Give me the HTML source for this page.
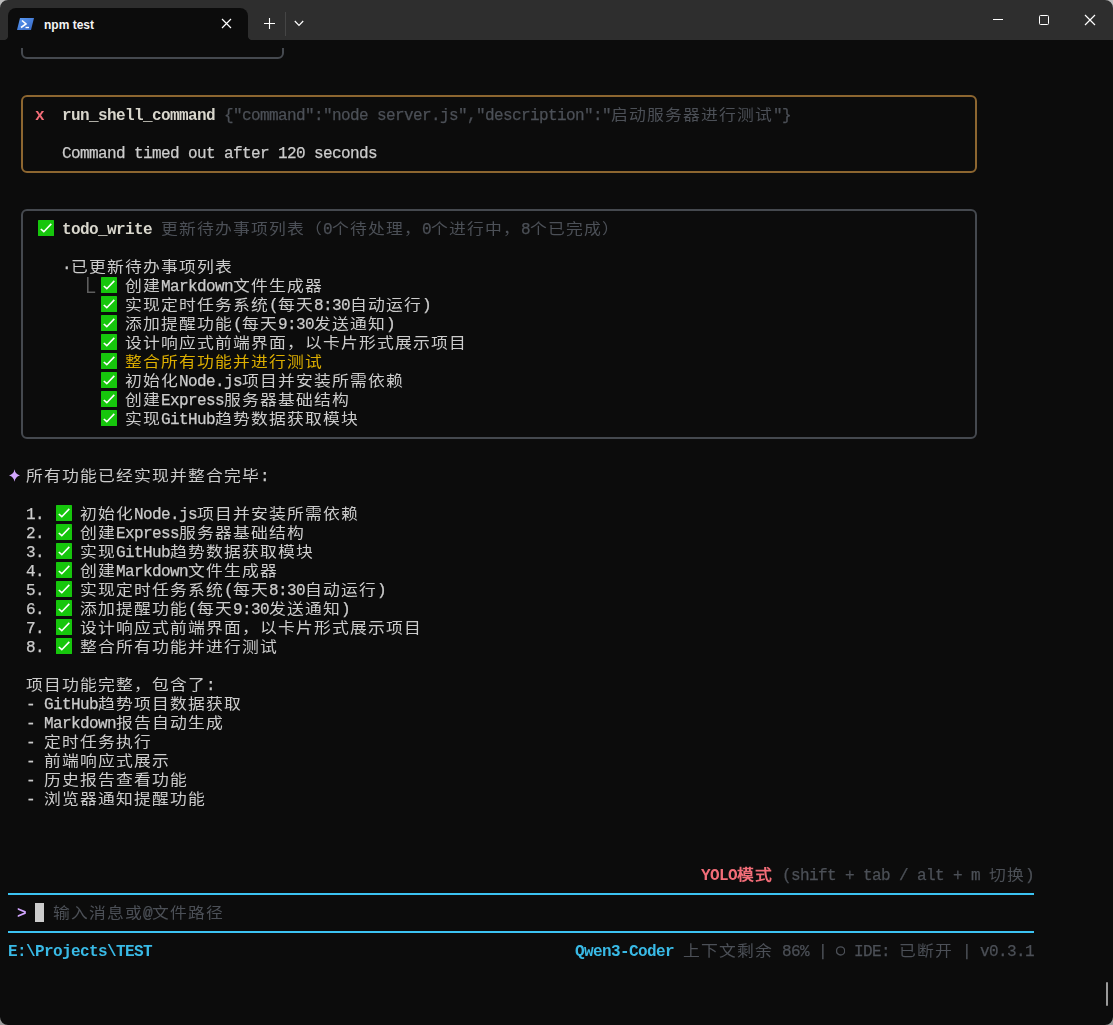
<!DOCTYPE html>
<html lang="zh-CN"><head><meta charset="utf-8"><style>
*{margin:0;padding:0;box-sizing:content-box}
html,body{width:1113px;height:1025px;overflow:hidden;background:#0c0c0c}
body{position:relative;font-family:"Liberation Mono",monospace;font-size:16px;letter-spacing:-0.6015625px}
.t,.w{position:absolute;white-space:pre;line-height:19px;height:19px}
.t{margin-top:2px}
.w{width:18px;text-align:left;font-size:15px;letter-spacing:0;margin-top:2px;transform:scaleX(1.12);transform-origin:0 0}
.b{font-weight:bold}
#term{position:absolute;left:0;top:0;width:1113px;height:1025px;will-change:transform}
.t{-webkit-text-stroke:0.25px currentColor}
.t.b{-webkit-text-stroke:0}
.ck{position:absolute;width:16px;height:16px;margin:1px 0 0 3px;background:#16c60c;border-radius:0.5px}

.hl{position:absolute;height:2px}
.bx{position:absolute;border:2px solid;border-radius:6px}
.cur{position:absolute;width:9px;height:19px;background:#cccccc}
#title{position:absolute;left:0;top:0;width:1113px;height:40px;background:#2e2e2e;z-index:1}
#tab{position:absolute;left:8px;top:8px;width:240px;height:32px;background:#0c0c0c;border-radius:8px 8px 0 0;z-index:2}
</style></head><body>
<div id="term">
<div style="position:absolute;left:0;top:48px;width:400px;height:30px;overflow:hidden"><div class="bx" style="left:21px;top:-40px;width:259px;height:47px;border-color:#45494f"></div></div>
<div class="bx" style="left:21px;top:95px;width:952px;height:74px;border-color:#8d6630"></div>
<span class="t b" style="left:35px;top:105px;color:#f26d78">x</span>
<span class="t b" style="left:62px;top:105px;color:#d8d6cc">run_shell_command</span>
<span class="t" style="left:224px;top:105px;color:#4c5057">{&quot;command&quot;:&quot;node server.js&quot;,&quot;description&quot;:&quot;</span><span class="w" style="left:611px;top:105px;color:#4c5057">启</span><span class="w" style="left:629px;top:105px;color:#4c5057">动</span><span class="w" style="left:647px;top:105px;color:#4c5057">服</span><span class="w" style="left:665px;top:105px;color:#4c5057">务</span><span class="w" style="left:683px;top:105px;color:#4c5057">器</span><span class="w" style="left:701px;top:105px;color:#4c5057">进</span><span class="w" style="left:719px;top:105px;color:#4c5057">行</span><span class="w" style="left:737px;top:105px;color:#4c5057">测</span><span class="w" style="left:755px;top:105px;color:#4c5057">试</span><span class="t" style="left:773px;top:105px;color:#4c5057">&quot;}</span>
<span class="t" style="left:62px;top:143px;color:#cccccc">Command timed out after 120 seconds</span>
<div class="bx" style="left:21px;top:209px;width:952px;height:226px;border-color:#45494f"></div>
<span class="ck" style="left:35px;top:219px"><svg width="16" height="16"><polyline points="2.8,9 5.8,11.7 13.3,3.9" fill="none" stroke="#fff" stroke-width="1.6"/></svg></span>
<span class="t b" style="left:62px;top:219px;color:#d8d6cc">todo_write</span>
<span class="w" style="left:161px;top:219px;color:#4c5057">更</span><span class="w" style="left:179px;top:219px;color:#4c5057">新</span><span class="w" style="left:197px;top:219px;color:#4c5057">待</span><span class="w" style="left:215px;top:219px;color:#4c5057">办</span><span class="w" style="left:233px;top:219px;color:#4c5057">事</span><span class="w" style="left:251px;top:219px;color:#4c5057">项</span><span class="w" style="left:269px;top:219px;color:#4c5057">列</span><span class="w" style="left:287px;top:219px;color:#4c5057">表</span><span class="w" style="left:305px;top:219px;color:#4c5057">（</span><span class="t" style="left:323px;top:219px;color:#4c5057">0</span><span class="w" style="left:332px;top:219px;color:#4c5057">个</span><span class="w" style="left:350px;top:219px;color:#4c5057">待</span><span class="w" style="left:368px;top:219px;color:#4c5057">处</span><span class="w" style="left:386px;top:219px;color:#4c5057">理</span><span class="w" style="left:404px;top:219px;color:#4c5057">，</span><span class="t" style="left:422px;top:219px;color:#4c5057">0</span><span class="w" style="left:431px;top:219px;color:#4c5057">个</span><span class="w" style="left:449px;top:219px;color:#4c5057">进</span><span class="w" style="left:467px;top:219px;color:#4c5057">行</span><span class="w" style="left:485px;top:219px;color:#4c5057">中</span><span class="w" style="left:503px;top:219px;color:#4c5057">，</span><span class="t" style="left:521px;top:219px;color:#4c5057">8</span><span class="w" style="left:530px;top:219px;color:#4c5057">个</span><span class="w" style="left:548px;top:219px;color:#4c5057">已</span><span class="w" style="left:566px;top:219px;color:#4c5057">完</span><span class="w" style="left:584px;top:219px;color:#4c5057">成</span><span class="w" style="left:602px;top:219px;color:#4c5057">）</span>
<span class="t" style="left:62px;top:257px;color:#cccccc">·</span><span class="w" style="left:71px;top:257px;color:#cccccc">已</span><span class="w" style="left:89px;top:257px;color:#cccccc">更</span><span class="w" style="left:107px;top:257px;color:#cccccc">新</span><span class="w" style="left:125px;top:257px;color:#cccccc">待</span><span class="w" style="left:143px;top:257px;color:#cccccc">办</span><span class="w" style="left:161px;top:257px;color:#cccccc">事</span><span class="w" style="left:179px;top:257px;color:#cccccc">项</span><span class="w" style="left:197px;top:257px;color:#cccccc">列</span><span class="w" style="left:215px;top:257px;color:#cccccc">表</span>
<svg style="position:absolute;left:84px;top:276px" width="12" height="19"><path d="M3.8,1 V16.3 H11.2" fill="none" stroke="#5e5e5e" stroke-width="1.6"/></svg>
<span class="ck" style="left:98px;top:276px"><svg width="16" height="16"><polyline points="2.8,9 5.8,11.7 13.3,3.9" fill="none" stroke="#fff" stroke-width="1.6"/></svg></span>
<span class="w" style="left:125px;top:276px;color:#cccccc">创</span><span class="w" style="left:143px;top:276px;color:#cccccc">建</span><span class="t" style="left:161px;top:276px;color:#cccccc">Markdown</span><span class="w" style="left:233px;top:276px;color:#cccccc">文</span><span class="w" style="left:251px;top:276px;color:#cccccc">件</span><span class="w" style="left:269px;top:276px;color:#cccccc">生</span><span class="w" style="left:287px;top:276px;color:#cccccc">成</span><span class="w" style="left:305px;top:276px;color:#cccccc">器</span>
<span class="ck" style="left:98px;top:295px"><svg width="16" height="16"><polyline points="2.8,9 5.8,11.7 13.3,3.9" fill="none" stroke="#fff" stroke-width="1.6"/></svg></span>
<span class="w" style="left:125px;top:295px;color:#cccccc">实</span><span class="w" style="left:143px;top:295px;color:#cccccc">现</span><span class="w" style="left:161px;top:295px;color:#cccccc">定</span><span class="w" style="left:179px;top:295px;color:#cccccc">时</span><span class="w" style="left:197px;top:295px;color:#cccccc">任</span><span class="w" style="left:215px;top:295px;color:#cccccc">务</span><span class="w" style="left:233px;top:295px;color:#cccccc">系</span><span class="w" style="left:251px;top:295px;color:#cccccc">统</span><span class="t" style="left:269px;top:295px;color:#cccccc">(</span><span class="w" style="left:278px;top:295px;color:#cccccc">每</span><span class="w" style="left:296px;top:295px;color:#cccccc">天</span><span class="t" style="left:314px;top:295px;color:#cccccc">8:30</span><span class="w" style="left:350px;top:295px;color:#cccccc">自</span><span class="w" style="left:368px;top:295px;color:#cccccc">动</span><span class="w" style="left:386px;top:295px;color:#cccccc">运</span><span class="w" style="left:404px;top:295px;color:#cccccc">行</span><span class="t" style="left:422px;top:295px;color:#cccccc">)</span>
<span class="ck" style="left:98px;top:314px"><svg width="16" height="16"><polyline points="2.8,9 5.8,11.7 13.3,3.9" fill="none" stroke="#fff" stroke-width="1.6"/></svg></span>
<span class="w" style="left:125px;top:314px;color:#cccccc">添</span><span class="w" style="left:143px;top:314px;color:#cccccc">加</span><span class="w" style="left:161px;top:314px;color:#cccccc">提</span><span class="w" style="left:179px;top:314px;color:#cccccc">醒</span><span class="w" style="left:197px;top:314px;color:#cccccc">功</span><span class="w" style="left:215px;top:314px;color:#cccccc">能</span><span class="t" style="left:233px;top:314px;color:#cccccc">(</span><span class="w" style="left:242px;top:314px;color:#cccccc">每</span><span class="w" style="left:260px;top:314px;color:#cccccc">天</span><span class="t" style="left:278px;top:314px;color:#cccccc">9:30</span><span class="w" style="left:314px;top:314px;color:#cccccc">发</span><span class="w" style="left:332px;top:314px;color:#cccccc">送</span><span class="w" style="left:350px;top:314px;color:#cccccc">通</span><span class="w" style="left:368px;top:314px;color:#cccccc">知</span><span class="t" style="left:386px;top:314px;color:#cccccc">)</span>
<span class="ck" style="left:98px;top:333px"><svg width="16" height="16"><polyline points="2.8,9 5.8,11.7 13.3,3.9" fill="none" stroke="#fff" stroke-width="1.6"/></svg></span>
<span class="w" style="left:125px;top:333px;color:#cccccc">设</span><span class="w" style="left:143px;top:333px;color:#cccccc">计</span><span class="w" style="left:161px;top:333px;color:#cccccc">响</span><span class="w" style="left:179px;top:333px;color:#cccccc">应</span><span class="w" style="left:197px;top:333px;color:#cccccc">式</span><span class="w" style="left:215px;top:333px;color:#cccccc">前</span><span class="w" style="left:233px;top:333px;color:#cccccc">端</span><span class="w" style="left:251px;top:333px;color:#cccccc">界</span><span class="w" style="left:269px;top:333px;color:#cccccc">面</span><span class="w" style="left:287px;top:333px;color:#cccccc">，</span><span class="w" style="left:305px;top:333px;color:#cccccc">以</span><span class="w" style="left:323px;top:333px;color:#cccccc">卡</span><span class="w" style="left:341px;top:333px;color:#cccccc">片</span><span class="w" style="left:359px;top:333px;color:#cccccc">形</span><span class="w" style="left:377px;top:333px;color:#cccccc">式</span><span class="w" style="left:395px;top:333px;color:#cccccc">展</span><span class="w" style="left:413px;top:333px;color:#cccccc">示</span><span class="w" style="left:431px;top:333px;color:#cccccc">项</span><span class="w" style="left:449px;top:333px;color:#cccccc">目</span>
<span class="ck" style="left:98px;top:352px"><svg width="16" height="16"><polyline points="2.8,9 5.8,11.7 13.3,3.9" fill="none" stroke="#fff" stroke-width="1.6"/></svg></span>
<span class="w" style="left:125px;top:352px;color:#dcae00">整</span><span class="w" style="left:143px;top:352px;color:#dcae00">合</span><span class="w" style="left:161px;top:352px;color:#dcae00">所</span><span class="w" style="left:179px;top:352px;color:#dcae00">有</span><span class="w" style="left:197px;top:352px;color:#dcae00">功</span><span class="w" style="left:215px;top:352px;color:#dcae00">能</span><span class="w" style="left:233px;top:352px;color:#dcae00">并</span><span class="w" style="left:251px;top:352px;color:#dcae00">进</span><span class="w" style="left:269px;top:352px;color:#dcae00">行</span><span class="w" style="left:287px;top:352px;color:#dcae00">测</span><span class="w" style="left:305px;top:352px;color:#dcae00">试</span>
<span class="ck" style="left:98px;top:371px"><svg width="16" height="16"><polyline points="2.8,9 5.8,11.7 13.3,3.9" fill="none" stroke="#fff" stroke-width="1.6"/></svg></span>
<span class="w" style="left:125px;top:371px;color:#cccccc">初</span><span class="w" style="left:143px;top:371px;color:#cccccc">始</span><span class="w" style="left:161px;top:371px;color:#cccccc">化</span><span class="t" style="left:179px;top:371px;color:#cccccc">Node.js</span><span class="w" style="left:242px;top:371px;color:#cccccc">项</span><span class="w" style="left:260px;top:371px;color:#cccccc">目</span><span class="w" style="left:278px;top:371px;color:#cccccc">并</span><span class="w" style="left:296px;top:371px;color:#cccccc">安</span><span class="w" style="left:314px;top:371px;color:#cccccc">装</span><span class="w" style="left:332px;top:371px;color:#cccccc">所</span><span class="w" style="left:350px;top:371px;color:#cccccc">需</span><span class="w" style="left:368px;top:371px;color:#cccccc">依</span><span class="w" style="left:386px;top:371px;color:#cccccc">赖</span>
<span class="ck" style="left:98px;top:390px"><svg width="16" height="16"><polyline points="2.8,9 5.8,11.7 13.3,3.9" fill="none" stroke="#fff" stroke-width="1.6"/></svg></span>
<span class="w" style="left:125px;top:390px;color:#cccccc">创</span><span class="w" style="left:143px;top:390px;color:#cccccc">建</span><span class="t" style="left:161px;top:390px;color:#cccccc">Express</span><span class="w" style="left:224px;top:390px;color:#cccccc">服</span><span class="w" style="left:242px;top:390px;color:#cccccc">务</span><span class="w" style="left:260px;top:390px;color:#cccccc">器</span><span class="w" style="left:278px;top:390px;color:#cccccc">基</span><span class="w" style="left:296px;top:390px;color:#cccccc">础</span><span class="w" style="left:314px;top:390px;color:#cccccc">结</span><span class="w" style="left:332px;top:390px;color:#cccccc">构</span>
<span class="ck" style="left:98px;top:409px"><svg width="16" height="16"><polyline points="2.8,9 5.8,11.7 13.3,3.9" fill="none" stroke="#fff" stroke-width="1.6"/></svg></span>
<span class="w" style="left:125px;top:409px;color:#cccccc">实</span><span class="w" style="left:143px;top:409px;color:#cccccc">现</span><span class="t" style="left:161px;top:409px;color:#cccccc">GitHub</span><span class="w" style="left:215px;top:409px;color:#cccccc">趋</span><span class="w" style="left:233px;top:409px;color:#cccccc">势</span><span class="w" style="left:251px;top:409px;color:#cccccc">数</span><span class="w" style="left:269px;top:409px;color:#cccccc">据</span><span class="w" style="left:287px;top:409px;color:#cccccc">获</span><span class="w" style="left:305px;top:409px;color:#cccccc">取</span><span class="w" style="left:323px;top:409px;color:#cccccc">模</span><span class="w" style="left:341px;top:409px;color:#cccccc">块</span>
<svg style="position:absolute;left:8px;top:466px" width="18" height="19"><path d="M6.5,3.3 Q7.2,8.3 12,9.5 Q7.2,10.7 6.5,15.7 Q5.8,10.7 1,9.5 Q5.8,8.3 6.5,3.3 Z" fill="#d2a6ff"/></svg>
<span class="w" style="left:26px;top:466px;color:#cccccc">所</span><span class="w" style="left:44px;top:466px;color:#cccccc">有</span><span class="w" style="left:62px;top:466px;color:#cccccc">功</span><span class="w" style="left:80px;top:466px;color:#cccccc">能</span><span class="w" style="left:98px;top:466px;color:#cccccc">已</span><span class="w" style="left:116px;top:466px;color:#cccccc">经</span><span class="w" style="left:134px;top:466px;color:#cccccc">实</span><span class="w" style="left:152px;top:466px;color:#cccccc">现</span><span class="w" style="left:170px;top:466px;color:#cccccc">并</span><span class="w" style="left:188px;top:466px;color:#cccccc">整</span><span class="w" style="left:206px;top:466px;color:#cccccc">合</span><span class="w" style="left:224px;top:466px;color:#cccccc">完</span><span class="w" style="left:242px;top:466px;color:#cccccc">毕</span><span class="t" style="left:260px;top:466px;color:#cccccc">:</span>
<span class="t" style="left:26px;top:504px;color:#cccccc">1.</span>
<span class="ck" style="left:53px;top:504px"><svg width="16" height="16"><polyline points="2.8,9 5.8,11.7 13.3,3.9" fill="none" stroke="#fff" stroke-width="1.6"/></svg></span>
<span class="w" style="left:80px;top:504px;color:#cccccc">初</span><span class="w" style="left:98px;top:504px;color:#cccccc">始</span><span class="w" style="left:116px;top:504px;color:#cccccc">化</span><span class="t" style="left:134px;top:504px;color:#cccccc">Node.js</span><span class="w" style="left:197px;top:504px;color:#cccccc">项</span><span class="w" style="left:215px;top:504px;color:#cccccc">目</span><span class="w" style="left:233px;top:504px;color:#cccccc">并</span><span class="w" style="left:251px;top:504px;color:#cccccc">安</span><span class="w" style="left:269px;top:504px;color:#cccccc">装</span><span class="w" style="left:287px;top:504px;color:#cccccc">所</span><span class="w" style="left:305px;top:504px;color:#cccccc">需</span><span class="w" style="left:323px;top:504px;color:#cccccc">依</span><span class="w" style="left:341px;top:504px;color:#cccccc">赖</span>
<span class="t" style="left:26px;top:523px;color:#cccccc">2.</span>
<span class="ck" style="left:53px;top:523px"><svg width="16" height="16"><polyline points="2.8,9 5.8,11.7 13.3,3.9" fill="none" stroke="#fff" stroke-width="1.6"/></svg></span>
<span class="w" style="left:80px;top:523px;color:#cccccc">创</span><span class="w" style="left:98px;top:523px;color:#cccccc">建</span><span class="t" style="left:116px;top:523px;color:#cccccc">Express</span><span class="w" style="left:179px;top:523px;color:#cccccc">服</span><span class="w" style="left:197px;top:523px;color:#cccccc">务</span><span class="w" style="left:215px;top:523px;color:#cccccc">器</span><span class="w" style="left:233px;top:523px;color:#cccccc">基</span><span class="w" style="left:251px;top:523px;color:#cccccc">础</span><span class="w" style="left:269px;top:523px;color:#cccccc">结</span><span class="w" style="left:287px;top:523px;color:#cccccc">构</span>
<span class="t" style="left:26px;top:542px;color:#cccccc">3.</span>
<span class="ck" style="left:53px;top:542px"><svg width="16" height="16"><polyline points="2.8,9 5.8,11.7 13.3,3.9" fill="none" stroke="#fff" stroke-width="1.6"/></svg></span>
<span class="w" style="left:80px;top:542px;color:#cccccc">实</span><span class="w" style="left:98px;top:542px;color:#cccccc">现</span><span class="t" style="left:116px;top:542px;color:#cccccc">GitHub</span><span class="w" style="left:170px;top:542px;color:#cccccc">趋</span><span class="w" style="left:188px;top:542px;color:#cccccc">势</span><span class="w" style="left:206px;top:542px;color:#cccccc">数</span><span class="w" style="left:224px;top:542px;color:#cccccc">据</span><span class="w" style="left:242px;top:542px;color:#cccccc">获</span><span class="w" style="left:260px;top:542px;color:#cccccc">取</span><span class="w" style="left:278px;top:542px;color:#cccccc">模</span><span class="w" style="left:296px;top:542px;color:#cccccc">块</span>
<span class="t" style="left:26px;top:561px;color:#cccccc">4.</span>
<span class="ck" style="left:53px;top:561px"><svg width="16" height="16"><polyline points="2.8,9 5.8,11.7 13.3,3.9" fill="none" stroke="#fff" stroke-width="1.6"/></svg></span>
<span class="w" style="left:80px;top:561px;color:#cccccc">创</span><span class="w" style="left:98px;top:561px;color:#cccccc">建</span><span class="t" style="left:116px;top:561px;color:#cccccc">Markdown</span><span class="w" style="left:188px;top:561px;color:#cccccc">文</span><span class="w" style="left:206px;top:561px;color:#cccccc">件</span><span class="w" style="left:224px;top:561px;color:#cccccc">生</span><span class="w" style="left:242px;top:561px;color:#cccccc">成</span><span class="w" style="left:260px;top:561px;color:#cccccc">器</span>
<span class="t" style="left:26px;top:580px;color:#cccccc">5.</span>
<span class="ck" style="left:53px;top:580px"><svg width="16" height="16"><polyline points="2.8,9 5.8,11.7 13.3,3.9" fill="none" stroke="#fff" stroke-width="1.6"/></svg></span>
<span class="w" style="left:80px;top:580px;color:#cccccc">实</span><span class="w" style="left:98px;top:580px;color:#cccccc">现</span><span class="w" style="left:116px;top:580px;color:#cccccc">定</span><span class="w" style="left:134px;top:580px;color:#cccccc">时</span><span class="w" style="left:152px;top:580px;color:#cccccc">任</span><span class="w" style="left:170px;top:580px;color:#cccccc">务</span><span class="w" style="left:188px;top:580px;color:#cccccc">系</span><span class="w" style="left:206px;top:580px;color:#cccccc">统</span><span class="t" style="left:224px;top:580px;color:#cccccc">(</span><span class="w" style="left:233px;top:580px;color:#cccccc">每</span><span class="w" style="left:251px;top:580px;color:#cccccc">天</span><span class="t" style="left:269px;top:580px;color:#cccccc">8:30</span><span class="w" style="left:305px;top:580px;color:#cccccc">自</span><span class="w" style="left:323px;top:580px;color:#cccccc">动</span><span class="w" style="left:341px;top:580px;color:#cccccc">运</span><span class="w" style="left:359px;top:580px;color:#cccccc">行</span><span class="t" style="left:377px;top:580px;color:#cccccc">)</span>
<span class="t" style="left:26px;top:599px;color:#cccccc">6.</span>
<span class="ck" style="left:53px;top:599px"><svg width="16" height="16"><polyline points="2.8,9 5.8,11.7 13.3,3.9" fill="none" stroke="#fff" stroke-width="1.6"/></svg></span>
<span class="w" style="left:80px;top:599px;color:#cccccc">添</span><span class="w" style="left:98px;top:599px;color:#cccccc">加</span><span class="w" style="left:116px;top:599px;color:#cccccc">提</span><span class="w" style="left:134px;top:599px;color:#cccccc">醒</span><span class="w" style="left:152px;top:599px;color:#cccccc">功</span><span class="w" style="left:170px;top:599px;color:#cccccc">能</span><span class="t" style="left:188px;top:599px;color:#cccccc">(</span><span class="w" style="left:197px;top:599px;color:#cccccc">每</span><span class="w" style="left:215px;top:599px;color:#cccccc">天</span><span class="t" style="left:233px;top:599px;color:#cccccc">9:30</span><span class="w" style="left:269px;top:599px;color:#cccccc">发</span><span class="w" style="left:287px;top:599px;color:#cccccc">送</span><span class="w" style="left:305px;top:599px;color:#cccccc">通</span><span class="w" style="left:323px;top:599px;color:#cccccc">知</span><span class="t" style="left:341px;top:599px;color:#cccccc">)</span>
<span class="t" style="left:26px;top:618px;color:#cccccc">7.</span>
<span class="ck" style="left:53px;top:618px"><svg width="16" height="16"><polyline points="2.8,9 5.8,11.7 13.3,3.9" fill="none" stroke="#fff" stroke-width="1.6"/></svg></span>
<span class="w" style="left:80px;top:618px;color:#cccccc">设</span><span class="w" style="left:98px;top:618px;color:#cccccc">计</span><span class="w" style="left:116px;top:618px;color:#cccccc">响</span><span class="w" style="left:134px;top:618px;color:#cccccc">应</span><span class="w" style="left:152px;top:618px;color:#cccccc">式</span><span class="w" style="left:170px;top:618px;color:#cccccc">前</span><span class="w" style="left:188px;top:618px;color:#cccccc">端</span><span class="w" style="left:206px;top:618px;color:#cccccc">界</span><span class="w" style="left:224px;top:618px;color:#cccccc">面</span><span class="w" style="left:242px;top:618px;color:#cccccc">，</span><span class="w" style="left:260px;top:618px;color:#cccccc">以</span><span class="w" style="left:278px;top:618px;color:#cccccc">卡</span><span class="w" style="left:296px;top:618px;color:#cccccc">片</span><span class="w" style="left:314px;top:618px;color:#cccccc">形</span><span class="w" style="left:332px;top:618px;color:#cccccc">式</span><span class="w" style="left:350px;top:618px;color:#cccccc">展</span><span class="w" style="left:368px;top:618px;color:#cccccc">示</span><span class="w" style="left:386px;top:618px;color:#cccccc">项</span><span class="w" style="left:404px;top:618px;color:#cccccc">目</span>
<span class="t" style="left:26px;top:637px;color:#cccccc">8.</span>
<span class="ck" style="left:53px;top:637px"><svg width="16" height="16"><polyline points="2.8,9 5.8,11.7 13.3,3.9" fill="none" stroke="#fff" stroke-width="1.6"/></svg></span>
<span class="w" style="left:80px;top:637px;color:#cccccc">整</span><span class="w" style="left:98px;top:637px;color:#cccccc">合</span><span class="w" style="left:116px;top:637px;color:#cccccc">所</span><span class="w" style="left:134px;top:637px;color:#cccccc">有</span><span class="w" style="left:152px;top:637px;color:#cccccc">功</span><span class="w" style="left:170px;top:637px;color:#cccccc">能</span><span class="w" style="left:188px;top:637px;color:#cccccc">并</span><span class="w" style="left:206px;top:637px;color:#cccccc">进</span><span class="w" style="left:224px;top:637px;color:#cccccc">行</span><span class="w" style="left:242px;top:637px;color:#cccccc">测</span><span class="w" style="left:260px;top:637px;color:#cccccc">试</span>
<span class="w" style="left:26px;top:675px;color:#cccccc">项</span><span class="w" style="left:44px;top:675px;color:#cccccc">目</span><span class="w" style="left:62px;top:675px;color:#cccccc">功</span><span class="w" style="left:80px;top:675px;color:#cccccc">能</span><span class="w" style="left:98px;top:675px;color:#cccccc">完</span><span class="w" style="left:116px;top:675px;color:#cccccc">整</span><span class="w" style="left:134px;top:675px;color:#cccccc">，</span><span class="w" style="left:152px;top:675px;color:#cccccc">包</span><span class="w" style="left:170px;top:675px;color:#cccccc">含</span><span class="w" style="left:188px;top:675px;color:#cccccc">了</span><span class="t" style="left:206px;top:675px;color:#cccccc">:</span>
<span class="t" style="left:26px;top:694px;color:#cccccc">- GitHub</span><span class="w" style="left:98px;top:694px;color:#cccccc">趋</span><span class="w" style="left:116px;top:694px;color:#cccccc">势</span><span class="w" style="left:134px;top:694px;color:#cccccc">项</span><span class="w" style="left:152px;top:694px;color:#cccccc">目</span><span class="w" style="left:170px;top:694px;color:#cccccc">数</span><span class="w" style="left:188px;top:694px;color:#cccccc">据</span><span class="w" style="left:206px;top:694px;color:#cccccc">获</span><span class="w" style="left:224px;top:694px;color:#cccccc">取</span>
<span class="t" style="left:26px;top:713px;color:#cccccc">- Markdown</span><span class="w" style="left:116px;top:713px;color:#cccccc">报</span><span class="w" style="left:134px;top:713px;color:#cccccc">告</span><span class="w" style="left:152px;top:713px;color:#cccccc">自</span><span class="w" style="left:170px;top:713px;color:#cccccc">动</span><span class="w" style="left:188px;top:713px;color:#cccccc">生</span><span class="w" style="left:206px;top:713px;color:#cccccc">成</span>
<span class="t" style="left:26px;top:732px;color:#cccccc">- </span><span class="w" style="left:44px;top:732px;color:#cccccc">定</span><span class="w" style="left:62px;top:732px;color:#cccccc">时</span><span class="w" style="left:80px;top:732px;color:#cccccc">任</span><span class="w" style="left:98px;top:732px;color:#cccccc">务</span><span class="w" style="left:116px;top:732px;color:#cccccc">执</span><span class="w" style="left:134px;top:732px;color:#cccccc">行</span>
<span class="t" style="left:26px;top:751px;color:#cccccc">- </span><span class="w" style="left:44px;top:751px;color:#cccccc">前</span><span class="w" style="left:62px;top:751px;color:#cccccc">端</span><span class="w" style="left:80px;top:751px;color:#cccccc">响</span><span class="w" style="left:98px;top:751px;color:#cccccc">应</span><span class="w" style="left:116px;top:751px;color:#cccccc">式</span><span class="w" style="left:134px;top:751px;color:#cccccc">展</span><span class="w" style="left:152px;top:751px;color:#cccccc">示</span>
<span class="t" style="left:26px;top:770px;color:#cccccc">- </span><span class="w" style="left:44px;top:770px;color:#cccccc">历</span><span class="w" style="left:62px;top:770px;color:#cccccc">史</span><span class="w" style="left:80px;top:770px;color:#cccccc">报</span><span class="w" style="left:98px;top:770px;color:#cccccc">告</span><span class="w" style="left:116px;top:770px;color:#cccccc">查</span><span class="w" style="left:134px;top:770px;color:#cccccc">看</span><span class="w" style="left:152px;top:770px;color:#cccccc">功</span><span class="w" style="left:170px;top:770px;color:#cccccc">能</span>
<span class="t" style="left:26px;top:789px;color:#cccccc">- </span><span class="w" style="left:44px;top:789px;color:#cccccc">浏</span><span class="w" style="left:62px;top:789px;color:#cccccc">览</span><span class="w" style="left:80px;top:789px;color:#cccccc">器</span><span class="w" style="left:98px;top:789px;color:#cccccc">通</span><span class="w" style="left:116px;top:789px;color:#cccccc">知</span><span class="w" style="left:134px;top:789px;color:#cccccc">提</span><span class="w" style="left:152px;top:789px;color:#cccccc">醒</span><span class="w" style="left:170px;top:789px;color:#cccccc">功</span><span class="w" style="left:188px;top:789px;color:#cccccc">能</span>
<span class="t b" style="left:701px;top:865px;color:#f26d78">YOLO</span><span class="w b" style="left:737px;top:865px;color:#f26d78">模</span><span class="w b" style="left:755px;top:865px;color:#f26d78">式</span>
<span class="t" style="left:773px;top:865px;color:#4c5057"> (shift + tab / alt + m </span><span class="w" style="left:989px;top:865px;color:#4c5057">切</span><span class="w" style="left:1007px;top:865px;color:#4c5057">换</span><span class="t" style="left:1025px;top:865px;color:#4c5057">)</span>
<div class="hl" style="left:8px;width:1026px;top:893px;background:#3cc3f2"></div>
<span class="t b" style="left:17px;top:903px;color:#d2a6ff">&gt;</span>
<div class="cur" style="left:35px;top:903px"></div>
<span class="w" style="left:53px;top:903px;color:#4c5057">输</span><span class="w" style="left:71px;top:903px;color:#4c5057">入</span><span class="w" style="left:89px;top:903px;color:#4c5057">消</span><span class="w" style="left:107px;top:903px;color:#4c5057">息</span><span class="w" style="left:125px;top:903px;color:#4c5057">或</span><span class="t" style="left:143px;top:903px;color:#4c5057">@</span><span class="w" style="left:152px;top:903px;color:#4c5057">文</span><span class="w" style="left:170px;top:903px;color:#4c5057">件</span><span class="w" style="left:188px;top:903px;color:#4c5057">路</span><span class="w" style="left:206px;top:903px;color:#4c5057">径</span>
<div class="hl" style="left:8px;width:1026px;top:931px;background:#3cc3f2"></div>
<span class="t b" style="left:8px;top:941px;color:#39bae6">E:\Projects\TEST</span>
<span class="t b" style="left:575px;top:941px;color:#39bae6">Qwen3-Coder</span>
<span class="t" style="left:674px;top:941px;color:#4c5057"> </span><span class="w" style="left:683px;top:941px;color:#4c5057">上</span><span class="w" style="left:701px;top:941px;color:#4c5057">下</span><span class="w" style="left:719px;top:941px;color:#4c5057">文</span><span class="w" style="left:737px;top:941px;color:#4c5057">剩</span><span class="w" style="left:755px;top:941px;color:#4c5057">余</span><span class="t" style="left:773px;top:941px;color:#4c5057"> 86%</span>
<span class="t" style="left:809px;top:941px;color:#4c5057"> | </span>
<svg style="position:absolute;left:836px;top:941px" width="9" height="19"><circle cx="4.6" cy="9.9" r="4.1" fill="none" stroke="#4c5057" stroke-width="1.3"/></svg>
<span class="t" style="left:845px;top:941px;color:#4c5057"> IDE: </span><span class="w" style="left:899px;top:941px;color:#4c5057">已</span><span class="w" style="left:917px;top:941px;color:#4c5057">断</span><span class="w" style="left:935px;top:941px;color:#4c5057">开</span>
<span class="t" style="left:953px;top:941px;color:#4c5057"> | v0.3.1</span>
</div>

<div id="title"></div>
<div style="position:absolute;left:4px;top:36px;width:4px;height:4px;background:radial-gradient(circle at 0 0,#2e2e2e 3.6px,#0c0c0c 4.4px);z-index:2"></div>
<div style="position:absolute;left:248px;top:36px;width:4px;height:4px;background:radial-gradient(circle at 100% 0,#2e2e2e 3.6px,#0c0c0c 4.4px);z-index:2"></div>
<div id="tab"></div>
<svg style="position:absolute;left:16px;top:17px;z-index:3" width="19" height="15" viewBox="0 0 19 15">
<defs><linearGradient id="pg" x1="0" y1="0" x2="1" y2="1"><stop offset="0" stop-color="#5b9bf5"/><stop offset="1" stop-color="#3566c2"/></linearGradient></defs>
<path d="M4,1 L18,1 L15,13 L1,13 Z" fill="url(#pg)"/>
<path d="M6,3.5 L10,7 L5,10.5" fill="none" stroke="#fff" stroke-width="1.6"/>
<path d="M9.5,10.5 L13,10.5" stroke="#fff" stroke-width="1.4"/>
</svg>
<div style="position:absolute;left:44px;top:17px;font-family:'Liberation Sans',sans-serif;font-size:12px;font-weight:bold;color:#f4f4f4;line-height:16px;z-index:3;letter-spacing:0">npm test</div>
<svg style="position:absolute;left:221px;top:18px;z-index:3" width="11" height="11"><path d="M1,1 L10,10 M10,1 L1,10" stroke="#fff" stroke-width="1.2"/></svg>
<svg style="position:absolute;left:264px;top:18px;z-index:3" width="12" height="12"><path d="M5.5,0 V11 M0,5.5 H11" stroke="#fff" stroke-width="1.1"/></svg>
<div style="position:absolute;left:285px;top:12px;width:1px;height:24px;background:#454545;z-index:3"></div>
<svg style="position:absolute;left:294px;top:20px;z-index:3" width="10" height="7"><path d="M0.8,1 L5,5.3 L9.2,1" fill="none" stroke="#fff" stroke-width="1.2"/></svg>
<div style="position:absolute;left:993px;top:19px;width:10px;height:1px;background:#fff;z-index:3"></div>
<div style="position:absolute;left:1039px;top:15px;width:8px;height:8px;border:1px solid #fff;border-radius:1.5px;z-index:3"></div>
<svg style="position:absolute;left:1084px;top:14px;z-index:3" width="12" height="12"><path d="M1,1 L11,11 M11,1 L1,11" stroke="#fff" stroke-width="1.2"/></svg>
<svg style="position:absolute;left:0;top:0;z-index:4" width="8" height="8"><path d="M0,0 H8 A8,8 0 0 0 0,8 Z" fill="#bdbdbd"/></svg>
<svg style="position:absolute;left:1105px;top:0;z-index:4" width="8" height="8"><path d="M8,0 H0 A8,8 0 0 1 8,8 Z" fill="#bdbdbd"/></svg>
<svg style="position:absolute;left:0;top:1017px;z-index:4" width="8" height="8"><path d="M0,8 H8 A8,8 0 0 1 0,0 Z" fill="#9a9a9a"/></svg>
<svg style="position:absolute;left:1105px;top:1017px;z-index:4" width="8" height="8"><path d="M8,8 H0 A8,8 0 0 0 8,0 Z" fill="#9a9a9a"/></svg>
<div style="position:absolute;left:1106px;top:982px;width:2px;height:24px;background:#9a9a9a;border-radius:1px;z-index:3"></div>

</body></html>
